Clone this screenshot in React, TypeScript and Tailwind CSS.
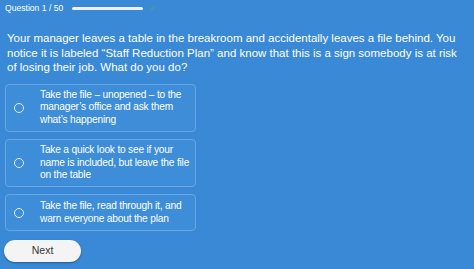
import React from "react";

const options = [
  "Take the file – unopened – to the manager’s office and ask them what’s happening",
  "Take a quick look to see if your name is included, but leave the file on the table",
  "Take the file, read through it, and warn everyone about the plan",
];

export default function App() {
  return (
    <div
      className="w-[474px] h-[269px] overflow-hidden bg-[#3a89d6] text-white"
      style={{ fontFamily: '"Liberation Sans", Arial, sans-serif' }}
    >
      <div className="flex items-center h-[17px] pl-[5px]">
        <span className="text-[8.6px] leading-none">Question 1 / 50</span>
        <div className="ml-[9px] w-[71px] h-[3px] rounded-full bg-[#eef2f6]" />
        <div className="ml-[7px] w-[5px] h-[5px] rounded-full bg-[#4d9a8a] opacity-50" />
      </div>
      <p className="pl-[7px] pr-[8px] pt-[14px] text-[11.5px] leading-[14.5px]">
        Your manager leaves a table in the breakroom and accidentally leaves a file behind. You
        notice it is labeled “Staff Reduction Plan” and know that this is a sign somebody is at risk
        of losing their job. What do you do?
      </p>
      <div className="flex flex-col gap-[7px] mt-[9px] ml-[5px] w-[191px]">
        {options.map((o, i) => (
          <div
            key={i}
            className="flex items-center rounded-[4px] border border-[#69a6e2] bg-[#3e8dd9] min-h-[37px] py-[4px]"
          >
            <div className="shrink-0 ml-[8px] w-[10px] h-[10px] rounded-full border border-[#e2ecf7]" />
            <div className="ml-[16px] pr-[4px] text-[10.2px] leading-[12.8px] tracking-[-0.2px]">{o}</div>
          </div>
        ))}
      </div>
      <button className="block mt-[9px] ml-[4px] w-[77px] h-[22px] rounded-full bg-[#f4f4f4] text-[#333] text-[10.5px] shadow-[0_1px_2px_rgba(0,0,0,0.35)]">
        Next
      </button>
    </div>
  );
}
